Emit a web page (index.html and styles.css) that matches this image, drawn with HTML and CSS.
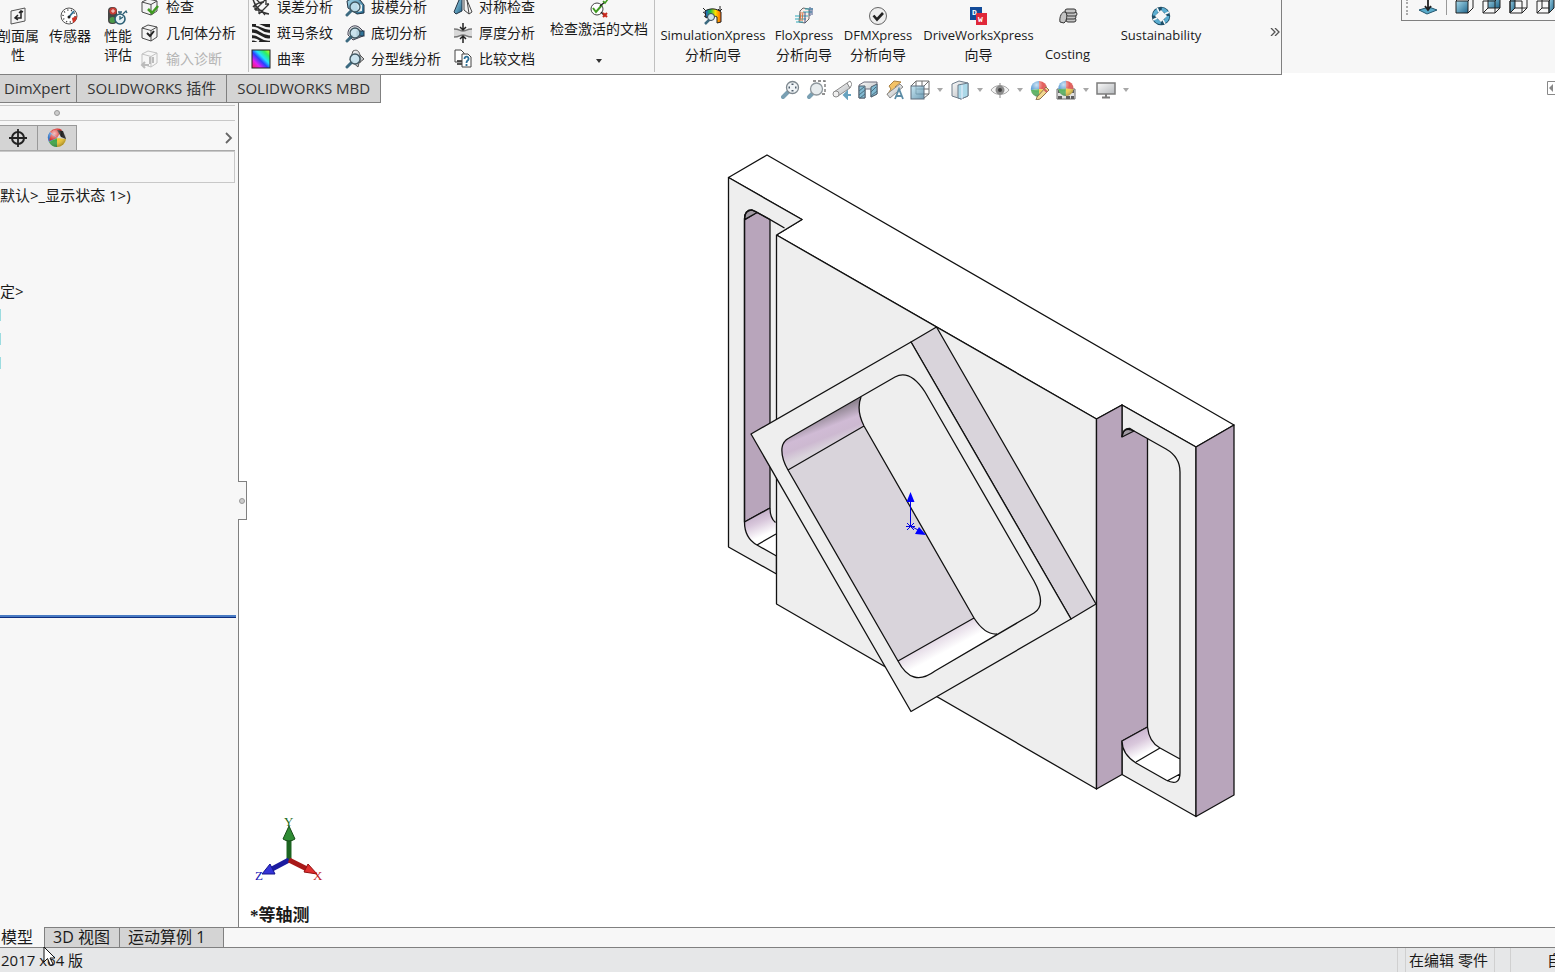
FILE: index.html
```html
<!DOCTYPE html>
<html lang="zh-CN">

<head>
    <meta charset="UTF-8">
    <meta name="viewport" content="width=device-width, initial-scale=1.0">
    <title>SOLIDWORKS 2017</title>
    <link rel="stylesheet" href="styles.css">
</head>

<body>

    <!-- Shared gradients -->
    <svg class="defs" width="0" height="0">
        <defs>
            <linearGradient id="blue" x1="0" y1="0" x2="1" y2="1">
                <stop offset="0" stop-color="#a9dcee" />
                <stop offset="1" stop-color="#1f668c" />
            </linearGradient>
            <linearGradient id="grey" x1="0" y1="0" x2="1" y2="1">
                <stop offset="0" stop-color="#fafafa" />
                <stop offset="1" stop-color="#a8acb0" />
            </linearGradient>
            <linearGradient id="rainbow" x1="0" y1="1" x2="1" y2="0">
                <stop offset="0" stop-color="#ff2050" />
                <stop offset=".25" stop-color="#e020f0" />
                <stop offset=".45" stop-color="#2840ff" />
                <stop offset=".6" stop-color="#20e0ff" />
                <stop offset=".8" stop-color="#30f060" />
                <stop offset="1" stop-color="#e0ff20" />
            </linearGradient>
            <linearGradient id="heat" x1="0" y1="0" x2="1" y2="0">
                <stop offset="0" stop-color="#2050e0" />
                <stop offset=".35" stop-color="#20c040" />
                <stop offset=".65" stop-color="#ffe000" />
                <stop offset="1" stop-color="#ff6000" />
            </linearGradient>
            <radialGradient id="shine" cx=".35" cy=".25" r=".8">
                <stop offset="0" stop-color="#fff" stop-opacity=".7" />
                <stop offset=".5" stop-color="#fff" stop-opacity="0" />
                <stop offset="1" stop-color="#000" stop-opacity=".35" />
            </radialGradient>
            <g id="ball">
                <path d="M10 10V1A9 9 0 0 0 1 11Z" fill="#3f8fd0" />
                <path d="M10 10V1A9 9 0 0 1 19 11Z" fill="#e0403c" />
                <path d="M10 10L1 11A9 9 0 0 0 10 19Z" fill="#3fa648" />
                <path d="M10 10L19 11A9 9 0 0 1 10 19Z" fill="#f0c630" />
                <circle cx="10" cy="10" r="9" fill="url(#shine)" />
            </g>
            <g id="lens">
                <path d="M7 13L2 18" stroke="#3c6a80" stroke-width="3" stroke-linecap="round" />
                <circle cx="10" cy="10" r="5" fill="#c8e4f0" fill-opacity=".85" stroke="#3f5660" stroke-width="1.3" />
            </g>
            <g id="cube" fill="#f4f4f4" stroke="#4a4a4a" stroke-linejoin="round">
                <path d="M2 5L8 2L17 4V14L11 18L2 15Z" />
                <path d="M2 5L11 7.500L17 4M11 7.500V18" fill="none" />
            </g>
        </defs>
    </svg>

    <header class="top">
        <div class="ribbon">
            <button class="big section-props"><svg class="icon" viewBox="0 0 20 20"><path d="M3 5L17 2V15L3 18Z" fill="#f4f4f4" stroke="#555" /><path d="M13 5V12H7M10 9L7 12L10 14M11 7L13 5L15 6" fill="none" stroke="#222" stroke-width="1.500" /></svg><span>剖面属性</span></button>
            <button class="big sensor"><svg class="icon" viewBox="0 0 20 20"><circle cx="9" cy="10" r="8" fill="#fff" stroke="#555" /><circle cx="9" cy="10" r="6" fill="none" stroke="#333" stroke-width="1.500" stroke-dasharray="1 2.700" /><path d="M9 11L14 5" stroke="#2c6f92" stroke-width="1.800" /><path d="M12 12L17 10A8 8 0 0 1 13 17Z" fill="#d03428" /><circle cx="9" cy="11" r="1.500" fill="#222" /></svg><span>传感器</span></button>
            <button class="big perf"><svg class="icon" viewBox="0 0 20 20"><rect x="0" y="1" width="9" height="17" rx="4" fill="#454545" /><circle cx="5" cy="5" r="3.600" fill="#c83c34" /><path d="M5 3V7M3 5H7" stroke="#fff" stroke-width=".8" /><circle cx="4.500" cy="14" r="3" fill="#4b9a48" /><circle cx="12" cy="13" r="5" fill="#e6f2f6" stroke="#2c5f74" stroke-width="1.600" /><path d="M12 10V13L15 11M12 8V6M10 6H14M15 8L18 5L19 7" stroke="#2c5f74" stroke-width="1.300" fill="none" /></svg><span>性能评估</span></button>

            <div class="list checks">
                <button><svg class="icon" viewBox="0 0 20 20"><use href="#cube" /><path d="M8 12L12 16L18 9" fill="none" stroke="#3f9a20" stroke-width="2.500" /></svg>检查</button>
                <button><svg class="icon" viewBox="0 0 20 20"><use href="#cube" /><path d="M7 10L10 13L14 8" fill="none" stroke="#222" stroke-width="2" /></svg>几何体分析</button>
                <button disabled><svg class="icon" viewBox="0 0 20 20" opacity=".3"><use href="#cube" /><path d="M10 8V15M13 8V14M2 16H9M5 13L2 16L5 19" fill="none" stroke="#333" stroke-width="2" /></svg>输入诊断</button>
            </div>

            <div class="list errors">
                <button><svg class="icon" viewBox="0 0 20 20"><path d="M2 2C4 10 10 16 18 17M2 10C6 6 9 5 13 5" fill="none" stroke="#333" stroke-width="1.500" /><path d="M4 13L15 2M8 17L18 7M4 13L4 9M4 13H8M15 2H11M15 2V6M8 17V13M18 7H14M5 2L10 7M10 13L14 18" fill="none" stroke="#333" stroke-width="1.300" /></svg>误差分析</button>
                <button><svg class="icon" viewBox="0 0 20 20"><rect x="1" y="1" width="18" height="18" fill="#222" /><path d="M1 5C9 4 10 12 19 11M1 11C8 10 10 18 19 16.500M5 1.500C11 2 12 6 19 5.500M1 16.500C4 16 6 17 8 18.500" fill="none" stroke="#f5f5f5" stroke-width="2.400" /></svg>斑马条纹</button>
                <button><svg class="icon" viewBox="0 0 20 20"><rect x="1" y="1" width="18" height="18" fill="url(#rainbow)" stroke="#222" /></svg>曲率</button>
            </div>

            <div class="list drafts">
                <button><svg class="icon" viewBox="0 0 20 20"><path d="M2 4L8 1L15 3L19 8V16L12 17L3 11Z" fill="url(#blue)" stroke="#234" /><path d="M12 6L17 8V14L13 15Z" fill="#eef4f6" /><use href="#lens" /></svg>拔模分析</button>
                <button><svg class="icon" viewBox="0 0 20 20"><path d="M3 12C2 4 10 0 15 5L18 8V13L8 17Z" fill="url(#grey)" stroke="#445" /><rect x="12" y="8" width="7" height="5" fill="#2f7398" stroke="#234" /><use href="#lens" /></svg>底切分析</button>
                <button><svg class="icon" viewBox="0 0 20 20"><path d="M5 11L8 2C12 0 14 2 15 6L19 10L14 14L13 18Z" fill="url(#grey)" stroke="#555" /><path d="M15 6V14" stroke="#555" /><use href="#lens" /></svg>分型线分析</button>
            </div>

            <div class="list compares">
                <button><svg class="icon" viewBox="0 0 20 20"><path d="M1 15L6 3L9 1V14L3 17Z" fill="url(#blue)" stroke="#234" /><path d="M11 1L14 3L19 15L16 17L11 13Z" fill="#f4f4f4" stroke="#444" /><path d="M14 3L16 17" stroke="#444" /></svg>对称检查</button>
                <button><svg class="icon" viewBox="0 0 20 20"><path d="M1 6C7 6 6 8 10 8S13 6 19 6V14C13 14 14 12 10 12S7 14 1 14Z" fill="#d8d8d8" /><path d="M1 6C7 6 6 8 10 8S13 6 19 6M1 14C7 14 6 12 10 12S13 14 19 14" fill="none" stroke="#777" stroke-width="1.500" /><path d="M10 0V6M7 4L10 7L13 4M10 20V14M7 16L10 13L13 16" stroke="#222" stroke-width="1.500" fill="none" /></svg>厚度分析</button>
                <button><svg class="icon" viewBox="0 0 20 20"><path d="M2 1H8L11 4V13H2Z" fill="#fff" stroke="#444" /><path d="M4 12H10M4 15H10" stroke="#222" stroke-width="1.500" /><path d="M9 5H15L18 8V18H9Z" fill="#fff" stroke="#444" /><path d="M11.500 10C11.500 6.500 16 7 15.500 10C15.500 12 13.500 11 13.500 14M13.500 15V17" fill="none" stroke="#2c6f96" stroke-width="1.800" /></svg>比较文档</button>
            </div>

            <button class="big active-doc"><svg class="icon" viewBox="0 0 20 20"><circle cx="8" cy="10" r="6" fill="#fff" stroke="#444" /><path d="M4 9L7 13L13 6" fill="none" stroke="#3f9a20" stroke-width="2" /><path d="M11 7L16 3M12 13L16 17" stroke="#222" stroke-width="1.500" /><path d="M14 2L16 4L19 0" fill="none" stroke="#3f9a20" stroke-width="1.500" /><path d="M14 14L18 18M18 14L14 18" stroke="#c8281c" stroke-width="2" /></svg><span>检查激活的文档</span><i class="caret"></i></button>

            <div class="xpress">
                <button class="big sim"><svg class="icon" viewBox="0 0 20 20"><path d="M2 5C7 2 13 2 18 6V16L14 17V11C10 9 6 10 3 12Z" fill="url(#heat)" stroke="#222" /><path d="M0 2L3 5M0 6L3 8M1 10L3 11M17 0V5M15 3L17 5L19 3" stroke="#222" fill="none" /><path d="M7 13L2 18" stroke="#3c6a80" stroke-width="2.500" /><circle cx="8" cy="11" r="3.500" fill="#cfe6ee" stroke="#345" /></svg><span>SimulationXpress</span><span class="wizard">分析向导</span></button>
                <button class="big flo"><svg class="icon" viewBox="0 0 20 20"><path d="M6 5L9 2L15 3V13L11 17L5 16Z" fill="#f8ece8" stroke="#666" /><path d="M1 10H14M1 13H12M2 16H9M9 6H18M11 3H19" stroke="#2fa8b8" /><path d="M7 6L6 15M9 6L8 15" stroke="#d07040" /><path d="M11 6V17M16 1V10M18 2V9" stroke="#445588" /></svg><span>FloXpress</span><span class="wizard">分析向导</span></button>
                <button class="big dfm"><svg class="icon" viewBox="0 0 20 20"><circle cx="10" cy="10" r="8.500" fill="#eee" stroke="#666" /><path d="M5.500 9.500L9 13.500L15 7" fill="none" stroke="#222" stroke-width="2.600" /></svg><span>DFMXpress</span><span class="wizard">分析向导</span></button>
                <button class="big driveworks"><svg class="icon" viewBox="0 0 20 20"><rect x="1" y="1" width="12" height="13" fill="#124a98" /><rect x="7" y="7" width="11" height="12" fill="#e0283a" /><text x="3" y="9" class="dw">D</text><text x="9" y="16" class="dw">W</text></svg><span>DriveWorksXpress</span><span class="wizard">向导</span></button>
                <button class="big costing"><svg class="icon" viewBox="0 0 20 20"><g fill="#c4c4c4" stroke="#333"><rect x="8" y="12" width="10" height="4" rx="2" /><rect x="7" y="9" width="11" height="4" rx="2" /><rect x="8" y="6" width="11" height="4" rx="2" /><rect x="7" y="3" width="11" height="4" rx="2" /><path d="M2 16C1 11 4 5 7 6S9 15 6 17Z" /></g></svg><span>Costing</span></button>
                <button class="big sustain"><svg class="icon" viewBox="0 0 20 20"><circle cx="10" cy="10" r="6.500" fill="none" stroke="#1f4f68" stroke-width="5.500" /><circle cx="10" cy="10" r="6.500" fill="none" stroke="#5badd0" stroke-width="3.600" stroke-dasharray="7.200 3" /><path d="M10 4L16 10L10 16L4 10Z" fill="#f7f7f7" /><path d="M6 2L8 6M18 6L14 8M14 18L12 14M2 14L6 12" stroke="#f7f7f7" stroke-width="1.500" /></svg><span>Sustainability</span></button>
            </div>
            <button class="more" aria-label="更多"><svg width="10" height="8" viewBox="0 0 10 8"><path d="M1 0L5 4L1 8M5 0L9 4L5 8" fill="none" stroke="#555" stroke-width="1.300" /></svg></button>
        </div>

        <div class="standard-views">
            <i class="grip"></i>
            <button class="normal-to" aria-label="正视于"><svg class="icon" viewBox="0 0 20 20"><path d="M1 15L11 12L19 15L9 19Z" fill="#5aaccb" stroke="#24566f" /><path d="M10 0V14M7 11L10 15L13 11" fill="none" stroke="#222" stroke-width="1.800" /></svg></button>
            <button aria-label="前视"><svg class="icon" viewBox="0 0 20 20"><path d="M2 6H14V18H2Z" fill="url(#blue)" stroke="#222" /><path d="M2 6L7 1H19V13L14 18M14 6L19 1" fill="none" stroke="#222" /></svg></button>
            <button aria-label="后视"><svg class="icon" viewBox="0 0 20 20"><path d="M7 1H19V13H7Z" fill="url(#blue)" stroke="#222" /><path d="M2 6H14V18H2ZM2 18L7 13M14 18L19 13M14 6L19 1" fill="none" stroke="#222" /></svg></button>
            <button aria-label="左视"><svg class="icon" viewBox="0 0 20 20"><path d="M2 6L7 1V13L2 18Z" fill="url(#blue)" stroke="#222" /><path d="M2 6H14V18H2ZM7 13H19V0M14 18L19 13" fill="none" stroke="#222" /></svg></button>
            <button aria-label="右视"><svg class="icon" viewBox="0 0 20 20"><path d="M14 6L19 1V13L14 18Z" fill="url(#blue)" stroke="#222" /><path d="M2 6H14V18H2ZM2 18L7 13H14M7 13V0" fill="none" stroke="#222" /></svg></button>
        </div>
    </header>

    <div class="tab-row">
        <nav class="tabs">
            <button class="dimxpert">DimXpert</button>
            <button>SOLIDWORKS 插件</button>
            <button>SOLIDWORKS MBD</button>
        </nav>
        <div class="heads-up">
            <button aria-label="整屏显示全图"><svg class="icon" viewBox="0 0 20 20"><path d="M8 12L3 17" stroke="#6390a6" stroke-width="4" stroke-linecap="round" /><circle cx="12.500" cy="7.500" r="6" fill="#eef3f6" stroke="#68747c" stroke-width="1.300" /><path d="M12.500 3.500V5M12.500 10V11.500M8.500 7.500H10M15 7.500H16.500" stroke="#345" stroke-width="2" /></svg></button>
            <button aria-label="局部放大"><svg class="icon" viewBox="0 0 20 20"><path d="M7 1H19V14H14" fill="none" stroke="#555" stroke-width="1.300" stroke-dasharray="3 2" /><path d="M7 13L3 17" stroke="#6390a6" stroke-width="4" stroke-linecap="round" /><circle cx="10.500" cy="9" r="6" fill="#e3e9ec" stroke="#7b868c" stroke-width="1.300" /></svg></button>
            <button aria-label="上一视图"><svg class="icon" viewBox="0 0 20 20"><path d="M2 12L15 3L18 8L6 16Z" fill="url(#grey)" stroke="#777" /><path d="M15 3L18 1L20 4L18 8Z" fill="#fff" stroke="#777" /><circle cx="4" cy="14" r="3" fill="#eee" stroke="#777" /><path d="M19 15H13M15 12L12 15L15 18Z" fill="#4d92b5" stroke="#4d92b5" stroke-width="2" /></svg></button>
            <button aria-label="剖面视图"><svg class="icon" viewBox="0 0 20 20"><path d="M1 5L6 2H19V14L13 17V9H7V18L1 18Z" fill="url(#grey)" stroke="#556" /><path d="M1 6H7V18H1ZM13 7L19 4V14L13 17Z" fill="#6eb0cc" stroke="#345" /><path d="M1 11L6 7M1 15L7 10M2 18L7 14M13 12L18 7M13 16L19 11" stroke="#2c5569" /></svg></button>
            <button aria-label="动态注解视图"><svg class="icon" viewBox="0 0 20 20"><path d="M5 6L10 1L17 2L11 7L15 8L3 15L7 9Z" fill="#f2b84d" stroke="#9c6c20" /><path d="M3 14L16 4L19 7L6 18Z" fill="url(#grey)" stroke="#777" /><path d="M11 19L15 9L19 19M12 16H18" fill="none" stroke="#3f7896" stroke-width="1.800" /></svg></button>
            <button aria-label="视图定向"><svg class="icon" viewBox="0 0 20 20"><path d="M6 1H19V14H6ZM1 6L6 1M14 6L19 1M14 18L19 14M12 1V7M6 9H19" fill="none" stroke="#555" /><rect x="1" y="6" width="13" height="13" fill="url(#blue)" fill-opacity=".75" stroke="#456" /></svg></button>
            <i class="caret"></i>
            <button aria-label="显示样式"><svg class="icon" viewBox="0 0 20 20"><path d="M2 4L9 1L18 3V16L11 19L2 16Z" fill="url(#grey)" stroke="#567" /><path d="M8 5L18 3V16L11 19L8 18Z" fill="#9ed3e6" stroke="#567" /><path d="M12 5V19" stroke="#eef" /></svg></button>
            <i class="caret"></i>
            <button aria-label="隐藏/显示项目"><svg class="icon" viewBox="0 0 20 20"><path d="M1 10C5 4 15 4 19 10C15 16 5 16 1 10Z" fill="#f1f1f1" stroke="#999" /><circle cx="10" cy="10" r="4.500" fill="#777" /><circle cx="10" cy="10" r="2" fill="#222" /><path d="M10 3V7M10 14V18" stroke="#777" /></svg></button>
            <i class="caret"></i>
            <button aria-label="编辑外观"><svg class="icon" viewBox="0 0 20 20"><g transform="scale(.9)"><use href="#ball" /></g><path d="M7 17L16 7L19 10L10 19L6 20Z" fill="#f0d27c" stroke="#7a5a30" /><path d="M14 9L17 12" stroke="#c44" stroke-width="2" /></svg></button>
            <button aria-label="应用布景"><svg class="icon" viewBox="0 0 20 20"><path d="M1 9H19V19H1Z" fill="#ddd" stroke="#555" /><path d="M2 10H5V13H2ZM2 16H6V19H2ZM15 10H18V13H15ZM10 16H14V19H10ZM15 16H18V19H15Z" fill="#444" /><g transform="translate(1.500 0) scale(.84)"><use href="#ball" /></g></svg></button>
            <i class="caret"></i>
            <button aria-label="视图设置"><svg class="icon" viewBox="0 0 20 20"><rect x="1" y="3" width="18" height="11" fill="url(#grey)" stroke="#666" stroke-width="1.500" /><path d="M10 14V17M6 17.500H14" stroke="#666" stroke-width="2" /></svg></button>
            <i class="caret"></i>
        </div>
        <button class="collapse" aria-label="折叠"><svg width="8" height="14" viewBox="0 0 8 14"><path d="M8 .5H.5V13.500H8" fill="none" stroke="#888" /><path d="M6 3V11L2 7Z" fill="#888" /></svg></button>
    </div>

    <main class="workspace">
        <aside class="panel">
            <div class="splitter"><i class="dot"></i></div>
            <div class="panel-tabs">
                <button aria-label="DimXpertManager"><svg class="icon" viewBox="0 0 20 20"><circle cx="10" cy="10" r="6" fill="none" stroke="#222" stroke-width="2" /><path d="M10 1V19M1 10H19" stroke="#222" stroke-width="1.800" /></svg></button>
                <button aria-label="DisplayManager"><svg class="icon" viewBox="0 0 20 20"><path d="M10 10L3 4A9 9 0 0 1 15 2Z" fill="#d8302c" /><path d="M10 10L3 4A9 9 0 0 0 2 14Z" fill="#3478c8" /><path d="M10 10L2 14A9 9 0 0 0 10 19Z" fill="#3fa648" /><path d="M10 10L10 19A9 9 0 0 0 19 11Z" fill="#f0c630" /><path d="M10 10L2 13L4 6Z" fill="#d8302c" /><path d="M10 2L16 3L19 11L14 9Z" fill="#222" /><circle cx="10" cy="10" r="9" fill="url(#shine)" /></svg></button>
                <button class="expand" aria-label="展开"><svg width="8" height="12" viewBox="0 0 8 12"><path d="M1 1L6 6L1 11" fill="none" stroke="#666" stroke-width="1.800" /></svg></button>
            </div>
            <input class="filter" type="text" aria-label="过滤器">
            <ul class="tree">
                <li>默认&gt;_显示状态 1&gt;)</li>
                <li></li>
                <li></li>
                <li></li>
                <li>定&gt;</li>
                <li class="plane"></li>
                <li class="plane"></li>
                <li class="plane"></li>
            </ul>
            <button class="handle" aria-label="折叠面板"><i class="dot"></i></button>
        </aside>

        <section class="viewport">
            <svg class="model" viewBox="239 103 1316 824">
                <defs>
                    <linearGradient id="filletTop" gradientUnits="userSpaceOnUse" x1="818" y1="416" x2="830" y2="446">
                        <stop offset="0" stop-color="#8d838f" />
                        <stop offset=".45" stop-color="#d0bbd5" />
                        <stop offset=".7" stop-color="#cdb9d1" />
                        <stop offset="1" stop-color="#dad4dc" />
                    </linearGradient>
                    <linearGradient id="filletBottom" gradientUnits="userSpaceOnUse" x1="936" y1="640" x2="943" y2="653">
                        <stop offset="0" stop-color="#e4dae6" />
                        <stop offset="1" stop-color="#fff" />
                    </linearGradient>
                    <linearGradient id="filletLeft" gradientUnits="userSpaceOnUse" x1="756" y1="514" x2="765" y2="535">
                        <stop offset="0" stop-color="#c4b0c9" />
                        <stop offset=".4" stop-color="#d9c8dc" />
                        <stop offset="1" stop-color="#fff" />
                    </linearGradient>
                    <linearGradient id="filletRight" gradientUnits="userSpaceOnUse" x1="1134" y1="734" x2="1144" y2="754">
                        <stop offset="0" stop-color="#cbb6d0" />
                        <stop offset=".4" stop-color="#d9c8dc" />
                        <stop offset="1" stop-color="#fff" />
                    </linearGradient>
                </defs>
                <g class="edges">
                    <!-- back plate -->
                    <path class="white" d="M728.500 177.500L767 155L1234 425L1196 447L1122 405L1096.500 419L776.500 235L802 219.500Z" />
                    <path class="face" d="M776.500 574L728.500 547V177.500L802 219.500L776.500 235Z" />

                    <!-- left slot -->
                    <path class="white" d="M776.500 222V556L757 545Q744.500 538 744.500 522V219Q744.500 210 752 210L757 212.500Z" stroke="none" />
                    <path class="face" d="M770 219V508Q770 520 776.500 524V223Z" stroke="none" />
                    <path class="wall" d="M744.500 220L757 212.500L770 219.500V508L744.500 522Z" />
                    <path d="M744.500 219Q744.500 210 752 210L757 212.500L744.500 219.500Z" fill="#a099a2" />
                    <path d="M744.500 522L770 508Q770 518 775.500 522.500V534L757 545Q744.500 538 744.500 522Z" fill="url(#filletLeft)" stroke="none" />
                    <path class="line" d="M776 534L757 545M770 508Q770 518 775.500 522.500M744.500 522L770 508" />
                    <path class="line" d="M776.500 556L757 545Q744.500 538 744.500 522V219Q744.500 210 752 210Q754 210 784.500 228" />

                    <!-- front plate -->
                    <path class="face" d="M776.500 235L1096.500 419V789L776.500 604Z" />

                    <!-- right slot and outer sides -->
                    <path class="face" d="M1122 405L1196 447V816.500L1122 774.500Z" />
                    <path class="wall" d="M1196 447L1234 425V795L1196 816.500Z" />
                    <path class="wall" d="M1096.500 419L1122 405V437L1134 431L1147.500 438V727L1122 741V774.500L1096.500 789Z" stroke="none" />
                    <path class="line" d="M1122 437V405L1096.500 419V789L1122 774.500V741L1147.500 727V438" />
                    <path d="M1122 437Q1123 428 1130 428.500L1134 431Z" fill="#a099a2" />
                    <path class="white" d="M1147.500 727Q1149 742 1160 748L1180 759V775Q1180 785 1170 782L1136 763Q1122 754 1122 741Z" stroke="none" />
                    <path d="M1147.500 727Q1149 742 1160 748L1136 763Q1122 754 1122 741Z" fill="url(#filletRight)" stroke="none" />
                    <path class="line" d="M1122 437Q1123 426 1134 431L1166 449Q1180 457 1180 472V773Q1180 787 1166 780L1136 763Q1122 754 1122 741L1147.500 727Q1149 742 1160 748L1180 759M1136 762L1160 748M1167 781L1180 774" />

                    <!-- tilted boss -->
                    <path class="side" d="M911 342L936.500 327L1096 604L1071 619Z" />
                    <path class="face" d="M751 434L911 342L1071 619L911 711.500Z" />
                    <path d="M788 470Q781 458 782 448Q783 441 789 438L861 397Q856 410 864 426Z" fill="url(#filletTop)" stroke="none" />
                    <path class="side" d="M788 470L864 426L974 618L898 661Z" stroke="none" />
                    <path d="M898 661L974 618Q985 635 997 634L935 671Q912 688 898 661Z" fill="url(#filletBottom)" stroke="none" />
                    <path class="line" d="M788 470L864 426L974 618L898 661M861 397Q856 410 864 426M974 618Q985 635 997 634" />
                    <path class="line" d="M788 470Q781 458 782 448Q783 441 789 438L895 377Q910 369 925 392L1034 581Q1047 605 1034 613L935 671Q912 688 898 661Z" />
                </g>

                <!-- origin -->
                <g stroke="#0000e0" fill="#0000ff">
                    <path d="M910.500 526V496M910.500 526L920 531M907 523L914 530M907 530L914 523M906 526.500H915" />
                    <path d="M910.500 492L906.500 502H914.500ZM926 535L915 534L919 527Z" stroke="none" />
                </g>
            </svg>

            <div class="orientation">
                <svg class="triad" width="80" height="68" viewBox="0 0 80 68">
                    <path d="M39 43V18" stroke="#1c6420" stroke-width="5" />
                    <path d="M39 9L33 22Q39 26 45 22Z" fill="#2f8c34" stroke="#164c18" />
                    <path d="M39 43L22 52" stroke="#1c1ca0" stroke-width="5" />
                    <path d="M12 57L20 47L25 57Z" fill="#3434d8" stroke="#14148c" />
                    <path d="M39 43L57 52" stroke="#a81818" stroke-width="5" />
                    <path d="M67 57L58 47L54 55Z" fill="#e03030" stroke="#901010" />
                    <text x="34" y="9" fill="#1c6c20">Y</text>
                    <text x="5" y="63" fill="#1414b4">Z</text>
                    <text x="63" y="63" fill="#c01818">X</text>
                </svg>
                <p>*等轴测</p>
            </div>
        </section>
    </main>

    <nav class="doc-tabs">
        <button class="active">模型</button>
        <button class="views">3D 视图</button>
        <button class="motion">运动算例 1</button>
        <span class="rest"></span>
    </nav>

    <footer class="status">
        <span class="version">2017 x64 版</span>
        <span class="cell gap"></span>
        <span class="cell mode">在编辑 零件</span>
        <span class="cell gap2"></span>
        <span class="cell units">自</span>
    </footer>

    <svg class="cursor" width="14" height="21" viewBox="0 0 14 21"><path d="M1 1V16L4.500 12.500L7.500 19.500L10 18L7 12H12Z" fill="#fff" stroke="#111" /></svg>

</body>

</html>
```
FILE: styles.css
```css
/* Basic Reset */
* {
    margin: 0;
    padding: 0;
    box-sizing: border-box;
}

body {
    position: relative;
    display: flex;
    flex-direction: column;
    height: 100vh;
    overflow: hidden;
    background-color: #fff;
    color: #1a1a1a;
    font-family: "Open Sans", "Noto Sans CJK SC", sans-serif;
    font-size: 15px;
    line-height: 20px;
}

button {
    border: none;
    background: none;
    color: inherit;
    font: inherit;
    white-space: nowrap;
}

.defs {
    position: absolute;
}

.icon {
    display: block;
    flex: none;
    width: 20px;
    height: 20px;
}

.caret {
    flex: none;
    width: 6px;
    margin: 0 1px;
    border: 3px solid transparent;
    border-top: 4px solid #999;
    border-bottom: none;
}

.dot {
    width: 6px;
    height: 6px;
    border: 1px solid #999;
    border-radius: 50%;
    background-color: #ccc;
}

/* Ribbon */
.top {
    display: flex;
    flex: none;
    justify-content: space-between;
    align-items: flex-start;
    height: 75px;
    background: linear-gradient(#f7f7f7 73px, #fff 73px);
}

.ribbon {
    display: flex;
    flex: none;
    height: 75px;
    border-right: 1px solid #808080;
    border-bottom: 1px solid #808080;
    background-color: #f7f7f7;
    font-size: 14px;
    line-height: 19px;
}

.big {
    display: flex;
    flex: none;
    flex-direction: column;
    align-items: center;
    height: 66px;
    padding-top: 6px;
}

.big span {
    white-space: normal;
}

.section-props {
    width: 42px;
    margin-left: -3px;
}

.sensor {
    width: 62px;
}

.perf {
    width: 34px;
}

.perf span {
    width: 28px;
}

.active-doc {
    width: 108px;
    height: 74px;
    padding-top: 0;
    margin-top: -1px;
    margin-right: 1px;
}

.active-doc .caret {
    margin-top: auto;
    margin-bottom: 10px;
    border-top-color: #333;
}

.list {
    flex: none;
    height: 72px;
    margin-top: -6px;
}

.list button {
    display: flex;
    align-items: center;
    gap: 6px;
    height: 26px;
    padding-bottom: 1px;
}

.list button:disabled {
    color: #b4b4b4;
}

.checks {
    width: 108px;
    margin-left: 5px;
}

.errors {
    width: 97px;
    height: 78px;
    padding-left: 2px;
    border-left: 1px solid #c0c0c0;
}

.drafts {
    width: 108px;
}

.compares {
    width: 92px;
}

.xpress {
    display: flex;
    height: 72px;
    padding-left: 1px;
    border-left: 1px solid #c0c0c0;
    font-size: 13px;
}

.wizard {
    font-size: 14px;
}

.sim {
    width: 114px;
}

.flo {
    width: 68px;
}

.dfm {
    width: 80px;
}

.driveworks {
    width: 121px;
}

.costing {
    justify-content: space-between;
    width: 57px;
    padding-bottom: 2px;
}

.sustain {
    width: 130px;
}

.dw {
    fill: #fff;
    font: bold 8px "Liberation Mono", monospace;
}

.more {
    width: 12px;
    height: 60px;
    margin-left: 43px;
}

.standard-views {
    display: flex;
    align-items: flex-end;
    gap: 7px;
    height: 21px;
    padding: 0 0 5px 4px;
    border-left: 1px solid #808080;
    border-bottom: 1px solid #808080;
    overflow: hidden;
}

.standard-views .grip {
    width: 2px;
    height: 16px;
    border-left: 2px dotted #aaa;
}

.normal-to {
    width: 32px;
    padding-left: 3px;
    border-right: 1px solid #999;
}

/* Command tabs and heads-up view toolbar */
.tab-row {
    display: flex;
    flex: none;
    align-items: center;
    height: 28px;
}

.tabs {
    display: flex;
    height: 28px;
}

.tabs button {
    padding: 0 10px 2px;
    border-right: 1px solid #808080;
    border-bottom: 1px solid #808080;
    background-color: #d4d4d4;
    color: #333;
}

.tabs .dimxpert {
    padding: 0 6px 2px 4px;
}

.heads-up {
    display: flex;
    flex: 1;
    align-items: center;
    justify-content: center;
    gap: 6px;
    padding: 2px 18px 0 0;
    opacity: 0.85;
}

/* Workspace */
.workspace {
    display: flex;
    flex: 1;
    min-height: 0;
}

.panel {
    position: relative;
    flex: none;
    width: 239px;
    border-right: 1px solid #808080;
    background-color: #f7f7f7;
}

.splitter {
    display: flex;
    align-items: center;
    height: 16px;
    margin: 2px 3px 0 0;
    padding-left: 54px;
    border-top: 1px solid #c8c8c8;
    border-bottom: 1px solid #c8c8c8;
}

.panel-tabs {
    display: flex;
    height: 26px;
    margin: 4px 3px 0 0;
    border-bottom: 1px solid #aaa;
}

.panel-tabs button {
    width: 40px;
    padding-left: 9px;
    border: 1px solid #999;
    border-bottom: none;
    background-color: #d4d4d4;
}

.panel-tabs button:first-child {
    width: 37px;
    padding-left: 8px;
    border-right: none;
    border-left: none;
}

.panel-tabs .expand {
    margin-left: auto;
    width: 12px;
    padding: 0;
    border: none;
    background: none;
}

.filter {
    display: block;
    width: 235px;
    height: 32px;
    padding: 0 6px;
    border: 1px solid #c8c8c8;
    border-left: none;
    background-color: #f7f7f7;
    font: inherit;
}

.tree {
    height: 435px;
    margin-right: 2px;
    border-bottom: 1px solid #0d2f80;
    box-shadow: inset 0 -2px #4a7cc4;
    list-style: none;
    line-height: 24px;
}

.tree li {
    height: 24px;
    white-space: nowrap;
}

.plane {
    width: 1px;
    border: solid #f7f7f7;
    border-width: 6px 0;
    background-color: #9cdce0;
}

.handle {
    position: absolute;
    top: 378px;
    right: -9px;
    z-index: 1;
    display: flex;
    align-items: center;
    justify-content: center;
    width: 9px;
    height: 39px;
    border: 1px solid #808080;
    border-left: none;
    background-color: #f7f7f7;
}

.viewport {
    position: relative;
    flex: 1;
    min-width: 0;
    background-color: #fff;
}

.model {
    display: block;
    width: 100%;
    height: 100%;
}

.edges path {
    stroke: #111;
    stroke-width: 1.3;
    stroke-linejoin: round;
}

.edges path[stroke="none"] {
    stroke: none;
}

.edges .white {
    fill: #fff;
}

.edges .face {
    fill: #eee;
}

.edges .side {
    fill: #d9d4db;
}

.edges .wall {
    fill: #b8a5bb;
}

.edges .line {
    fill: none;
}

/* View triad and name lie over the drawing area */
.orientation {
    position: absolute;
    left: 11px;
    bottom: 1px;
    font-family: "Liberation Serif", "Noto Sans CJK SC", serif;
    font-size: 17px;
    font-weight: bold;
}

.triad {
    display: block;
    margin-bottom: 21px;
    overflow: visible;
    font-size: 13px;
    font-weight: normal;
}

/* Document tabs */
.doc-tabs {
    display: flex;
    flex: none;
    height: 21px;
    border-bottom: 1px solid #808080;
    background-color: #f7f7f7;
    font-size: 16px;
}

.doc-tabs button {
    border-top: 1px solid #808080;
    border-right: 1px solid #808080;
    background-color: #d4d4d4;
    line-height: 19px;
    text-align: left;
}

.doc-tabs .active {
    width: 45px;
    padding-left: 1px;
    border-top: none;
    background-color: #f7f7f7;
}

.views {
    width: 75px;
    padding-left: 8px;
}

.motion {
    width: 104px;
    padding-left: 8px;
}

.rest {
    flex: 1;
    border-top: 1px solid #808080;
}

/* Status bar */
.status {
    display: flex;
    flex: none;
    height: 24px;
    padding-left: 1px;
    background-color: #e6e7e8;
    line-height: 25px;
    white-space: nowrap;
    overflow: hidden;
}

.version {
    flex: 1;
}

.cell {
    flex: none;
    border-left: 1px solid #d0d0d0;
}

.gap {
    width: 8px;
}

.mode {
    width: 89px;
    padding-left: 3px;
}

.gap2 {
    width: 16px;
}

.units {
    width: 45px;
    padding-left: 36px;
    overflow: hidden;
}

.cursor {
    position: absolute;
    left: 43px;
    bottom: 5px;
}
```
